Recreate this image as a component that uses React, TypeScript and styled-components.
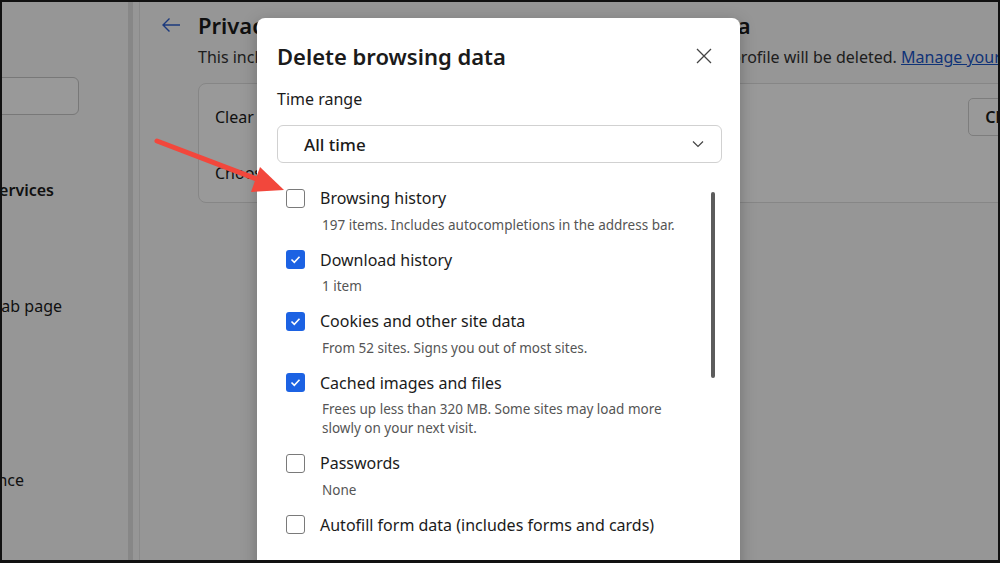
import React from "react";
import styled, { createGlobalStyle } from "styled-components";

const Global = createGlobalStyle`
  html, body { margin: 0; padding: 0; background: #000; }
  * { box-sizing: border-box; }
  body { font-family: "Noto Sans", "Open Sans", Arial, sans-serif; }
`;

const Frame = styled.div`
  position: relative;
  width: 1000px;
  height: 563px;
  border: 2px solid #111;
  border-bottom-width: 3px;
  overflow: hidden;
  background: #fafafa;
  display: flex;
`;

const Sidebar = styled.aside`
  width: 126px;
  flex: none;
  background: #fafafa;
  overflow: hidden;
  padding-top: 75px;
  display: flex;
  flex-direction: column;
`;

const SearchBox = styled.div`
  margin-left: -40px;
  width: 117px;
  height: 38px;
  border: 1px solid #c8c8c8;
  border-radius: 6px;
  background: #fff;
  flex: none;
`;

const NavItem = styled.div<{ $right: number; $top: number; $bold?: boolean }>`
  display: flex;
  justify-content: flex-end;
  white-space: nowrap;
  padding-right: ${(p) => p.$right}px;
  margin-top: ${(p) => p.$top}px;
  height: 24px;
  line-height: 24px;
  font-size: 16px;
  font-weight: ${(p) => (p.$bold ? 600 : 400)};
  color: #1b1b1b;
`;

const DividerBand = styled.div`
  width: 5px;
  flex: none;
  background: #e2e2e2;
`;

const Gutter = styled.div`
  width: 7px;
  flex: none;
  background: #fafafa;
  border-right: 1px solid #e6e6e6;
`;

const Main = styled.main`
  flex: 1;
  overflow: hidden;
  background: #fafafa;
  padding: 9px 0 0 58px;
  display: flex;
  flex-direction: column;
`;

const HeaderRow = styled.div`
  display: flex;
  align-items: center;
  gap: 17px;
  margin-left: -37px;
  height: 28px;
`;

const PageTitle = styled.h1`
  margin: 0;
  font-size: 22px;
  line-height: 28px;
  font-weight: 600;
  color: #1b1b1b;
  white-space: nowrap;
`;

const Subtitle = styled.p`
  margin: 7px 0 0;
  font-size: 16px;
  line-height: 22px;
  color: #333;
  white-space: nowrap;
`;

const Link = styled.a`
  color: #1a56c8;
  text-decoration: underline;
`;

const Card = styled.section`
  margin-top: 15px;
  width: 985px;
  height: 120px;
  border: 1px solid #e0e0e0;
  border-radius: 8px;
  background: #fff;
  padding: 0 16px;
  display: flex;
  flex-direction: column;
`;

const CardRow = styled.div<{ $h: number; $align: string; $pt?: number }>`
  height: ${(p) => p.$h}px;
  display: flex;
  align-items: ${(p) => p.$align};
  justify-content: space-between;
  padding-top: ${(p) => p.$pt ?? 0}px;
  font-size: 16px;
  line-height: 22px;
  color: #1b1b1b;
  white-space: nowrap;
`;

const GhostButton = styled.button`
  height: 38px;
  padding: 0 16px;
  border: 1px solid #d0d0d0;
  border-radius: 5px;
  background: #fff;
  font: 600 16px "Noto Sans", sans-serif;
  color: #1b1b1b;
  white-space: nowrap;
`;

const Overlay = styled.div`
  position: absolute;
  inset: 0;
  background: rgba(0, 0, 0, 0.4);
`;

const Dialog = styled.div`
  position: absolute;
  left: 255px;
  top: 16px;
  width: 483px;
  height: 600px;
  background: #fff;
  border-radius: 8px;
  box-shadow: 0 4px 16px rgba(0, 0, 0, 0.25);
  padding: 23px 18px 0 20px;
  display: flex;
  flex-direction: column;
`;

const DialogHeader = styled.div`
  display: flex;
  align-items: center;
  justify-content: space-between;
  height: 30px;
`;

const DialogTitle = styled.h2`
  margin: 0;
  font-size: 22px;
  line-height: 30px;
  font-weight: 600;
  color: #1b1b1b;
`;

const CloseButton = styled.button`
  width: 32px;
  height: 32px;
  margin-right: 2px;
  border: none;
  background: transparent;
  display: flex;
  align-items: center;
  justify-content: center;
  padding: 0;
`;

const FieldLabel = styled.div`
  margin-top: 17px;
  font-size: 16px;
  line-height: 22px;
  color: #1b1b1b;
`;

const Select = styled.div`
  margin-top: 15px;
  height: 38px;
  border: 1px solid #d1d1d1;
  border-radius: 6px;
  display: flex;
  align-items: center;
  justify-content: space-between;
  padding: 0 17px 0 26px;
  font-size: 17px;
  font-weight: 500;
  color: #1b1b1b;
`;

const ListArea = styled.div`
  position: relative;
  margin-top: 23px;
  padding-left: 9px;
  display: flex;
  flex-direction: column;
  gap: 13px;
`;

const ScrollThumb = styled.div`
  position: absolute;
  right: 7px;
  top: 6px;
  width: 4px;
  height: 186px;
  border-radius: 2px;
  background: #5c5c5c;
`;

const Item = styled.div`
  display: flex;
  flex-direction: column;
`;

const ItemRow = styled.label`
  display: flex;
  align-items: center;
  gap: 15px;
  height: 24px;
  font-size: 16px;
  line-height: 24px;
  color: #1b1b1b;
`;

const Box = styled.span<{ $checked: boolean }>`
  width: 19px;
  height: 19px;
  flex: none;
  border-radius: 3px;
  border: ${(p) => (p.$checked ? "none" : "1.5px solid #7a7a7a")};
  background: ${(p) => (p.$checked ? "#1c62e3" : "#fff")};
  display: flex;
  align-items: center;
  justify-content: center;
`;

const ItemSub = styled.div`
  margin-top: 5.5px;
  padding-left: 36px;
  font-size: 13.5px;
  line-height: 19px;
  color: #555;
  max-width: 408px;
`;

const ArrowSvg = styled.svg`
  position: absolute;
  left: -2px;
  top: -2px;
  pointer-events: none;
`;

type Entry = { label: string; sub?: string; checked: boolean };

const entries: Entry[] = [
  { label: "Browsing history", sub: "197 items. Includes autocompletions in the address bar.", checked: false },
  { label: "Download history", sub: "1 item", checked: true },
  { label: "Cookies and other site data", sub: "From 52 sites. Signs you out of most sites.", checked: true },
  {
    label: "Cached images and files",
    sub: "Frees up less than 320 MB. Some sites may load more slowly on your next visit.",
    checked: true,
  },
  { label: "Passwords", sub: "None", checked: false },
  { label: "Autofill form data (includes forms and cards)", checked: false },
];

export default function App() {
  return (
    <>
      <Global />
      <Frame>
        <Sidebar>
          <SearchBox />
          <NavItem $right={74} $top={63} $bold>
            Privacy, search, and services
          </NavItem>
          <NavItem $right={66} $top={92}>
            Start, home, and new tab page
          </NavItem>
          <NavItem $right={104} $top={150}>
            System and performance
          </NavItem>
        </Sidebar>
        <DividerBand />
        <Gutter />
        <Main>
          <HeaderRow>
            <svg width="20" height="16" viewBox="0 0 20 16">
              <path d="M19 8H2M8.5 1.5L2 8l6.5 6.5" fill="none" stroke="#2d5fd0" strokeWidth="1.4" />
            </svg>
            <PageTitle>Privacy, search, and services / Delete browsing data</PageTitle>
          </HeaderRow>
          <Subtitle>
            This includes history, passwords, cookies, and other site data from this profile will be deleted.{" "}
            <Link>Manage your data</Link>
          </Subtitle>
          <Card>
            <CardRow $h={66} $align="center">
              <span>Clear browsing data now</span>
              <GhostButton>Choose what to clear</GhostButton>
            </CardRow>
            <CardRow $h={52} $align="flex-start" $pt={12}>
              <span>Choose what to clear every time you close the browser</span>
            </CardRow>
          </Card>
        </Main>
        <Overlay />
        <Dialog>
          <DialogHeader>
            <DialogTitle>Delete browsing data</DialogTitle>
            <CloseButton aria-label="Close">
              <svg width="16" height="16" viewBox="0 0 16 16">
                <path d="M1 1l14 14M15 1L1 15" stroke="#444" strokeWidth="1.3" />
              </svg>
            </CloseButton>
          </DialogHeader>
          <FieldLabel>Time range</FieldLabel>
          <Select>
            <span>All time</span>
            <svg width="12" height="8" viewBox="0 0 12 8">
              <path d="M1 1.5l5 5 5-5" fill="none" stroke="#444" strokeWidth="1.2" />
            </svg>
          </Select>
          <ListArea>
            <ScrollThumb />
            {entries.map((e) => (
              <Item key={e.label}>
                <ItemRow>
                  <Box $checked={e.checked}>
                    {e.checked && (
                      <svg width="11" height="9" viewBox="0 0 11 9">
                        <path d="M1.5 4.5l2.8 2.8L9.5 1.8" fill="none" stroke="#fff" strokeWidth="1.6" />
                      </svg>
                    )}
                  </Box>
                  {e.label}
                </ItemRow>
                {e.sub && <ItemSub>{e.sub}</ItemSub>}
              </Item>
            ))}
          </ListArea>
        </Dialog>
        <ArrowSvg width="1000" height="563" viewBox="0 0 1000 563">
          <line x1="157" y1="141" x2="262" y2="181" stroke="#f2473c" strokeWidth="5" strokeLinecap="round" />
          <polygon points="284,190 251,192 260,167" fill="#f2473c" />
        </ArrowSvg>
      </Frame>
    </>
  );
}
